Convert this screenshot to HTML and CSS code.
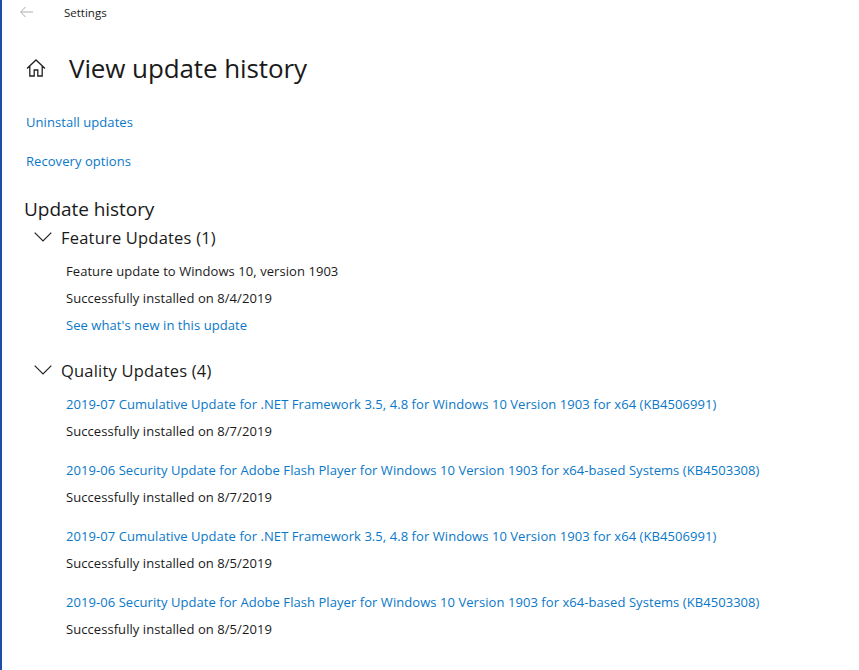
FILE: index.html
```html
<!DOCTYPE html>
<html lang="en">
<head>
    <meta charset="UTF-8">
    <title>Settings</title>
    <link rel="stylesheet" href="styles.css">
</head>
<body>
    <div class="window">
        <div class="titlebar">
            <svg class="back" width="13" height="12" viewBox="0 0 14 12"><path d="M6 .5 .8 6 6 11.5M1 6h13" fill="none" stroke="#a8a8a8" stroke-width="1"/></svg>
            <span class="app-name">Settings</span>
        </div>
        <div class="page-head">
            <svg class="home" width="20" height="18" viewBox="0 0 20 18"><path d="M1 9.5 10 1l9 8.5M3.8 7v10h4.4v-6h3.6v6h4.4V7" fill="none" stroke="#222" stroke-width="1.3"/></svg>
            <h1>View update history</h1>
        </div>
        <div class="links">
            <a class="link">Uninstall updates</a>
            <a class="link">Recovery options</a>
        </div>
        <h2>Update history</h2>
        <div class="group">
            <div class="group-head">
                <svg class="chev" width="18" height="10" viewBox="0 0 18 10"><path d="M.7.7 9 9l8.3-8.3" fill="none" stroke="#222" stroke-width="1.2"/></svg>
                <h3>Feature Updates (1)</h3>
            </div>
            <div class="rows">
                <div class="row">Feature update to Windows 10, version 1903</div>
                <div class="row">Successfully installed on 8/4/2019</div>
                <div class="row"><a class="link">See what's new in this update</a></div>
            </div>
        </div>
        <div class="group quality">
            <div class="group-head">
                <svg class="chev" width="18" height="10" viewBox="0 0 18 10"><path d="M.7.7 9 9l8.3-8.3" fill="none" stroke="#222" stroke-width="1.2"/></svg>
                <h3>Quality Updates (4)</h3>
            </div>
            <div class="updates">
                <div class="update">
                    <div class="row"><a class="link">2019-07 Cumulative Update for .NET Framework 3.5, 4.8 for Windows 10 Version 1903 for x64 (KB4506991)</a></div>
                    <div class="row">Successfully installed on 8/7/2019</div>
                </div>
                <div class="update">
                    <div class="row"><a class="link">2019-06 Security Update for Adobe Flash Player for Windows 10 Version 1903 for x64-based Systems (KB4503308)</a></div>
                    <div class="row">Successfully installed on 8/7/2019</div>
                </div>
                <div class="update">
                    <div class="row"><a class="link">2019-07 Cumulative Update for .NET Framework 3.5, 4.8 for Windows 10 Version 1903 for x64 (KB4506991)</a></div>
                    <div class="row">Successfully installed on 8/5/2019</div>
                </div>
                <div class="update">
                    <div class="row"><a class="link">2019-06 Security Update for Adobe Flash Player for Windows 10 Version 1903 for x64-based Systems (KB4503308)</a></div>
                    <div class="row">Successfully installed on 8/5/2019</div>
                </div>
            </div>
        </div>
    </div>
</body>
</html>
```

FILE: styles.css
```css
html, body {
    margin: 0;
    height: 100%;
}
body {
    font-family: "Open Sans", "Noto Sans", sans-serif;
    color: #1a1a1a;
    background: #fff;
    overflow: hidden;
}
.window {
    height: 670px;
    box-sizing: border-box;
    border-left: 2px solid #1c4fa8;
    padding-left: 22px;
}
.titlebar {
    display: flex;
    align-items: center;
    height: 24px;
}
.back {
    margin-left: -4px;
}
.app-name {
    margin-left: 31px;
    font-size: 11.5px;
}
.page-head {
    display: flex;
    align-items: center;
    margin-top: 22px;
    height: 44px;
}
.home {
    margin-left: 2px;
}
h1 {
    margin: 0 0 0 23px;
    font-size: 26px;
    font-weight: 400;
    letter-spacing: -0.1px;
}
.links {
    display: flex;
    flex-direction: column;
    gap: 19px;
    margin: 22px 0 0 2px;
}
.link {
    color: #0a78c8;
    font-size: 13px;
    line-height: 20px;
    letter-spacing: 0.06px;
}
h2 {
    margin: 25px 0 0;
    font-size: 19px;
    line-height: 26px;
    font-weight: 400;
    letter-spacing: -0.05px;
}
.group-head {
    display: flex;
    align-items: center;
    height: 26px;
    margin: 2px 0 0 10px;
}
h3 {
    margin: 0 0 0 9px;
    font-size: 16.5px;
    font-weight: 400;
    letter-spacing: 0.2px;
}
.rows, .updates {
    margin: 8px 0 0 42px;
    font-size: 13px;
    letter-spacing: 0.06px;
}
.row {
    line-height: 27px;
}
.quality {
    margin-top: 18px;
}
.updates {
    margin-top: 8px;
}
.update {
    margin-bottom: 12px;
}
```
